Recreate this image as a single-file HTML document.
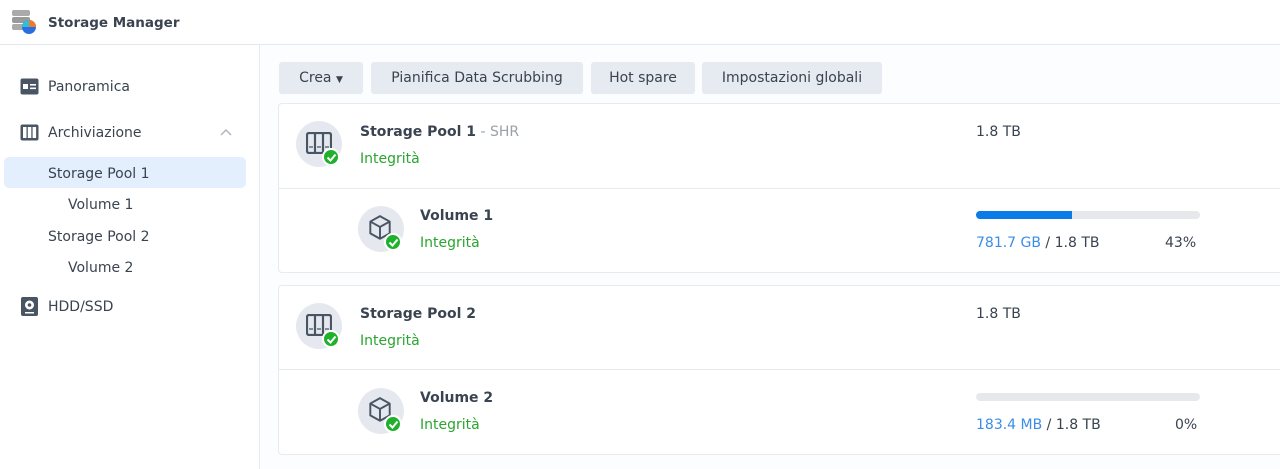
<!DOCTYPE html>
<html><head><meta charset="utf-8"><style>
*{margin:0;padding:0;box-sizing:border-box}
body{width:1280px;height:469px;overflow:hidden;background:#fff;font-family:"DejaVu Sans","Liberation Sans",sans-serif;font-size:14px;color:#3a4350;position:relative}
.a{position:absolute;white-space:nowrap}
.t{margin-top:1px}
.hdr{left:0;top:0;width:1280px;height:45px;border-bottom:1px solid #e3e8ee}
.side{left:0;top:45px;width:260px;height:424px;border-right:1px solid #e6ebf0}
.main{left:261px;top:45px;width:1019px;height:424px;background:#fcfdfe}
.btn{top:62px;height:32px;background:#e6ebf1;border-radius:3px;line-height:32px;text-align:center;font-size:14px;color:#3a4350}
.card{left:278px;width:1010px;background:#fff;border:1px solid #e6ebf0;border-radius:4px}
.circ{width:46px;height:46px;border-radius:50%;background:#e5e9ef}
.chk{width:18px;height:18px;border-radius:50%;background:#1fb12c;border:2px solid #fff}
.b{font-weight:bold}
.g{color:#2aa52f}
.bl{color:#3b8ee8}
.bar{left:976px;width:224px;height:8px;border-radius:4px;background:#e6e8eb;overflow:hidden}
</style></head><body>
<div class="a hdr"></div>
<svg class="a" style="left:11px;top:8px" width="26" height="28" viewBox="0 0 26 28"><rect x="1" y="2" width="18" height="6" rx="2" fill="#aaa"/><rect x="1" y="9" width="18" height="6" rx="2" fill="#999"/><rect x="1" y="16" width="18" height="6" rx="2" fill="#aaa"/><circle cx="18" cy="19" r="7" fill="#2a6fe0"/><path d="M18 12a7 7 0 0 1 7 7h-7z" fill="#f07a2a"/><path d="M11 19a7 7 0 0 1 7-7v7z" fill="#2ec0d8"/></svg>
<div class="a b" style="left:48px;top:15px;font-size:13.5px">Storage Manager</div>
<div class="a side"></div>
<div class="a main"></div>
<svg class="a" style="left:20px;top:78px" width="19" height="17" viewBox="0 0 19 17"><rect x="0.5" y="0.5" width="18" height="16" rx="2" fill="#4a5563"/><rect x="3" y="6" width="5" height="5" fill="#fff"/><rect x="10" y="6" width="6" height="1.6" fill="#fff"/><rect x="10" y="9.5" width="6" height="1.6" fill="#fff"/></svg>
<div class="a" style="left:48px;top:79px">Panoramica</div>
<svg class="a" style="left:20px;top:124px" width="19" height="17" viewBox="0 0 19 17"><rect x="0.5" y="0.5" width="18" height="16" rx="2" fill="#4a5563"/><rect x="3" y="3" width="3.5" height="11" fill="#fff"/><rect x="7.8" y="3" width="3.5" height="11" fill="#fff"/><rect x="12.6" y="3" width="3.5" height="11" fill="#fff"/></svg>
<div class="a" style="left:48px;top:125px">Archiviazione</div>
<svg class="a" style="left:219px;top:128px" width="14" height="9" viewBox="0 0 14 9"><path d="M2 7l5-5 5 5" stroke="#b0b6be" stroke-width="1.5" fill="none"/></svg>
<div class="a" style="left:4px;top:157px;width:242px;height:31px;background:#e3effc;border-radius:5px"></div>
<div class="a" style="left:48px;top:166px">Storage Pool 1</div>
<div class="a" style="left:68px;top:197px">Volume 1</div>
<div class="a" style="left:48px;top:229px">Storage Pool 2</div>
<div class="a" style="left:68px;top:260px">Volume 2</div>
<svg class="a" style="left:21px;top:297px" width="17" height="19" viewBox="0 0 17 19"><rect x="0" y="0" width="17" height="19" rx="2" fill="#4a5563"/><circle cx="8.5" cy="8" r="4.5" fill="#fff"/><circle cx="8.5" cy="8" r="1.8" fill="#4a5563"/><rect x="4" y="15" width="9" height="1.5" fill="#fff"/></svg>
<div class="a" style="left:48px;top:299px">HDD/SSD</div>

<div class="a btn" style="left:279px;width:84px;line-height:33px">Crea <span style="font-size:9px">▼</span></div>
<div class="a btn" style="left:371px;width:212px;line-height:33px">Pianifica Data Scrubbing</div>
<div class="a btn" style="left:591px;width:104px;line-height:33px">Hot spare</div>
<div class="a btn" style="left:702px;width:180px;line-height:33px">Impostazioni globali</div>

<div class="a card" style="top:103px;height:170px"></div>
<div class="a" style="left:279px;top:188px;width:1001px;height:1px;background:#e6ebf0"></div>
<div class="a card" style="top:285px;height:170px"></div>
<div class="a" style="left:279px;top:369px;width:1001px;height:1px;background:#e6ebf0"></div>

<div class="a circ" style="left:296px;top:121px"></div>
<svg class="a" style="left:306px;top:132px" width="26" height="22" viewBox="0 0 26 22"><rect x="1" y="1" width="24" height="20" rx="2" fill="none" stroke="#4a5563" stroke-width="2.2"/><path d="M9 2v18M17 2v18" stroke="#4a5563" stroke-width="2.2"/><path d="M3 15h4M11 15h4M19 15h4" stroke="#4a5563" stroke-width="1.2"/></svg>
<div class="a chk" style="left:322px;top:148px"></div>
<svg class="a" style="left:326px;top:153px" width="11" height="9" viewBox="0 0 11 9"><path d="M1.5 4.5l3 3 5-6" stroke="#fff" stroke-width="2" fill="none"/></svg>
<div class="a" style="left:360px;top:124px"><span class="b">Storage Pool 1</span> <span style="color:#9aa1a9">- SHR</span></div>
<div class="a g" style="left:360px;top:151px">Integrità</div>
<div class="a" style="left:976px;top:124px">1.8 TB</div>

<div class="a circ" style="left:358px;top:206px"></div>
<svg class="a" style="left:367px;top:214px" width="26" height="28" viewBox="0 0 24 26"><path d="M12 2l9 5v11l-9 5-9-5V7z M3 7l9 5 9-5 M12 12v11" fill="none" stroke="#4a5563" stroke-width="1.8" stroke-linejoin="round"/></svg>
<div class="a chk" style="left:384px;top:233px"></div>
<svg class="a" style="left:388px;top:238px" width="11" height="9" viewBox="0 0 11 9"><path d="M1.5 4.5l3 3 5-6" stroke="#fff" stroke-width="2" fill="none"/></svg>
<div class="a b" style="left:420px;top:208px">Volume 1</div>
<div class="a g" style="left:420px;top:235px">Integrità</div>
<div class="a bar" style="top:211px"><div style="width:96px;height:8px;background:#0a7be8"></div></div>
<div class="a" style="left:976px;top:235px"><span class="bl">781.7 GB</span> / 1.8 TB</div>
<div class="a" style="left:1165px;top:235px">43%</div>

<div class="a circ" style="left:296px;top:303px"></div>
<svg class="a" style="left:306px;top:314px" width="26" height="22" viewBox="0 0 26 22"><rect x="1" y="1" width="24" height="20" rx="2" fill="none" stroke="#4a5563" stroke-width="2.2"/><path d="M9 2v18M17 2v18" stroke="#4a5563" stroke-width="2.2"/><path d="M3 15h4M11 15h4M19 15h4" stroke="#4a5563" stroke-width="1.2"/></svg>
<div class="a chk" style="left:322px;top:330px"></div>
<svg class="a" style="left:326px;top:335px" width="11" height="9" viewBox="0 0 11 9"><path d="M1.5 4.5l3 3 5-6" stroke="#fff" stroke-width="2" fill="none"/></svg>
<div class="a b" style="left:360px;top:306px">Storage Pool 2</div>
<div class="a g" style="left:360px;top:333px">Integrità</div>
<div class="a" style="left:976px;top:306px">1.8 TB</div>

<div class="a circ" style="left:358px;top:388px"></div>
<svg class="a" style="left:367px;top:396px" width="26" height="28" viewBox="0 0 24 26"><path d="M12 2l9 5v11l-9 5-9-5V7z M3 7l9 5 9-5 M12 12v11" fill="none" stroke="#4a5563" stroke-width="1.8" stroke-linejoin="round"/></svg>
<div class="a chk" style="left:384px;top:415px"></div>
<svg class="a" style="left:388px;top:420px" width="11" height="9" viewBox="0 0 11 9"><path d="M1.5 4.5l3 3 5-6" stroke="#fff" stroke-width="2" fill="none"/></svg>
<div class="a b" style="left:420px;top:390px">Volume 2</div>
<div class="a g" style="left:420px;top:417px">Integrità</div>
<div class="a bar" style="top:393px"></div>
<div class="a" style="left:976px;top:417px"><span class="bl">183.4 MB</span> / 1.8 TB</div>
<div class="a" style="left:1175px;top:417px">0%</div>
</body></html>
